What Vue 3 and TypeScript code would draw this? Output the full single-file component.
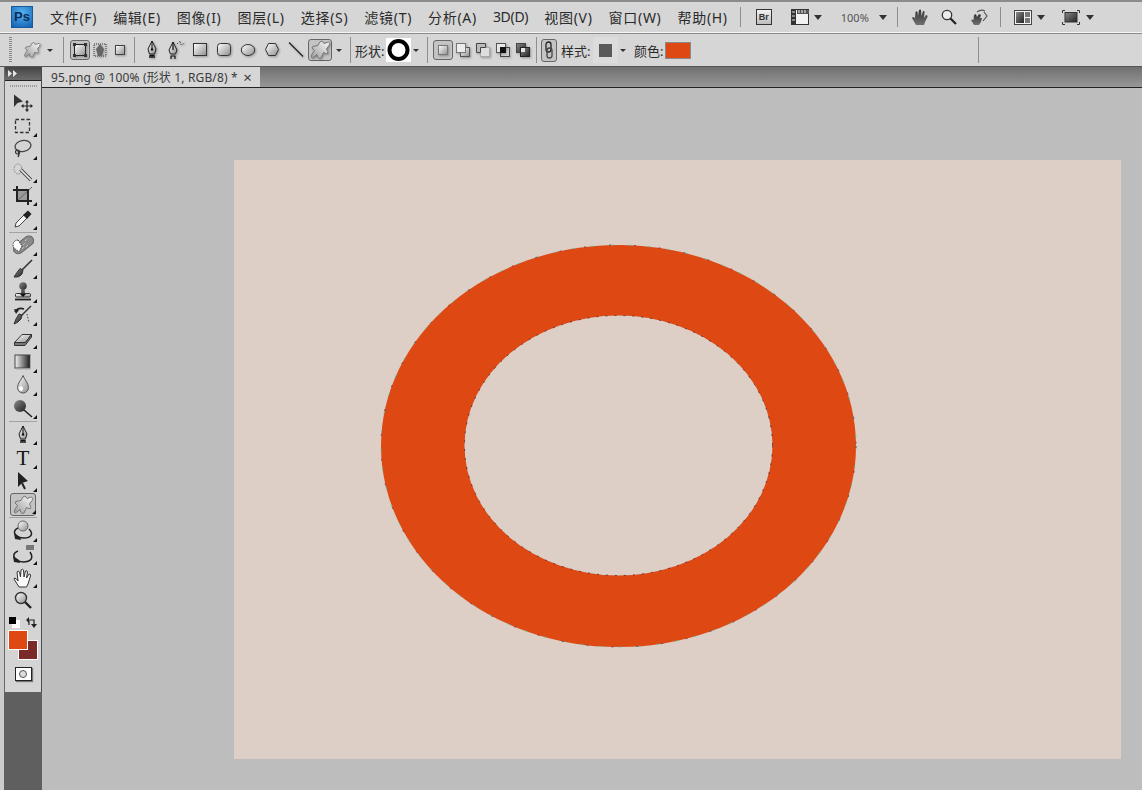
<script setup lang="ts">
interface Tool {
  icon: string;
  glyph?: string;
  corner?: boolean;
  active?: boolean;
}

const menus = ['文件(F)', '编辑(E)', '图像(I)', '图层(L)', '选择(S)', '滤镜(T)', '分析(A)', '3D(D)', '视图(V)', '窗口(W)', '帮助(H)'];

const shapeTools = ['i-pen', 'i-freepen', 'i-rect', 'i-rrect', 'i-ellipse', 'i-poly', 'i-line', 'i-splat'];
const pathModes = ['i-mode-new', 'i-mode-add', 'i-mode-sub', 'i-mode-int', 'i-mode-exc'];

// groupes de la barre d'outils, séparés par un filet
const toolGroups: Tool[][] = [
  [
    { icon: 't-move' },
    { icon: 't-marquee', corner: true },
    { icon: 't-lasso', corner: true },
    { icon: 't-wand', corner: true },
    { icon: 't-crop', corner: true },
    { icon: 't-dropper', corner: true },
  ],
  [
    { icon: 't-heal', corner: true },
    { icon: 't-brush', corner: true },
    { icon: 't-stamp', corner: true },
    { icon: 't-history', corner: true },
    { icon: 't-eraser', corner: true },
    { icon: 't-gradient', corner: true },
    { icon: 't-blur', corner: true },
    { icon: 't-dodge', corner: true },
  ],
  [
    { icon: 'i-pen', corner: true },
    { icon: 't-type', glyph: 'T', corner: true },
    { icon: 't-select', corner: true },
    { icon: 'i-splat', corner: true, active: true },
  ],
  [
    { icon: 't-rotate', corner: true },
    { icon: 't-orbit', corner: true },
    { icon: 't-hand', corner: true },
    { icon: 't-zoom' },
  ],
];
</script>

<template>
  <svg class="defs" aria-hidden="true">
    <defs>
      <linearGradient id="g-light" x1="0" y1="0" x2="1" y2="1">
        <stop offset="0" stop-color="#ffffff" />
        <stop offset="1" stop-color="#8f8f8f" />
      </linearGradient>
      <linearGradient id="g-dark" x1="0" y1="0" x2="1" y2="1">
        <stop offset="0" stop-color="#8a8a8a" />
        <stop offset="1" stop-color="#222222" />
      </linearGradient>
      <linearGradient id="g-ramp" x1="0" y1="0" x2="1" y2="0">
        <stop offset="0" stop-color="#f4f4f4" />
        <stop offset="1" stop-color="#1c1c1c" />
      </linearGradient>
      <linearGradient id="g-hand" x1="0" y1="0" x2="0" y2="1">
        <stop offset="0" stop-color="#333333" />
        <stop offset="1" stop-color="#707070" />
      </linearGradient>
      <linearGradient id="g-splat" x1="1" y1="0" x2="0" y2="1">
        <stop offset="0" stop-color="#fafafa" />
        <stop offset="1" stop-color="#9a9a9a" />
      </linearGradient>
    </defs>

    <symbol id="i-pen" viewBox="0 0 24 24">
      <path d="M12 3 L16 11 L14.500 16 H9.500 L8 11 Z" fill="url(#g-light)" stroke="#222" />
      <path d="M12 3 V11" stroke="#111" />
      <circle cx="12" cy="11.500" r="1.200" fill="#111" />
      <path d="M9.500 17.500 H14.500 M10 20 V17.500 M14 20 V17.500 M12 20 V17.500" stroke="#111" stroke-width="1.400" />
    </symbol>
    <symbol id="i-freepen" viewBox="0 0 24 24">
      <path d="M9 4 L13 12 L11.500 16 H6.500 L5 12 Z" fill="url(#g-light)" stroke="#222" />
      <path d="M9 4 V12 M6.500 18 H11.500 M7 21 V18 M11 21 V18" stroke="#111" stroke-width="1.200" />
      <path d="M13 6 L16 3 L17 7 L21 5" fill="none" stroke="#555" stroke-dasharray="1.500 1" />
    </symbol>
    <symbol id="i-rect" viewBox="0 0 24 24">
      <rect x="5.500" y="5.500" width="13" height="12" fill="url(#g-light)" stroke="#333" />
    </symbol>
    <symbol id="i-rrect" viewBox="0 0 24 24">
      <rect x="5.500" y="5.500" width="13" height="12" rx="3" fill="url(#g-light)" stroke="#333" />
    </symbol>
    <symbol id="i-ellipse" viewBox="0 0 24 24">
      <ellipse cx="12" cy="12" rx="6.700" ry="5.500" fill="url(#g-light)" stroke="#333" />
    </symbol>
    <symbol id="i-poly" viewBox="0 0 24 24">
      <path d="M8.500 5.500 H15.500 L18.500 11.500 L15.500 17.500 H8.500 L5.500 11.500 Z" fill="url(#g-light)" stroke="#333" />
    </symbol>
    <symbol id="i-line" viewBox="0 0 24 24">
      <path d="M5 4.500 L19 18.500" stroke="#222" stroke-width="1.300" />
    </symbol>
    <symbol id="i-splat" viewBox="0 0 24 24">
      <path d="M4.500 20 Q2.500 20 3.500 17 L6.500 12.500 L4 10 Q4 8 7 8 L10 7.500 Q11.500 3 14 3 L16 5.500 L20.500 4 Q22.500 5 21 7.500 L18.500 11 Q20.500 14 19.500 15.500 Q18 16 15.500 14.500 L13 20 Q11 21.500 9.500 19 L9 16.500 Z" fill="url(#g-splat)" stroke="#777" />
    </symbol>
    <symbol id="i-mode-new" viewBox="0 0 20 20">
      <rect x="5.500" y="5.500" width="9" height="9" fill="url(#g-light)" stroke="#777" />
    </symbol>
    <symbol id="i-mode-add" viewBox="0 0 20 20">
      <rect x="7.500" y="7.500" width="9" height="9" fill="url(#g-light)" stroke="#555" />
      <rect x="3.500" y="3.500" width="9" height="9" fill="#ececec" stroke="#777" />
    </symbol>
    <symbol id="i-mode-sub" viewBox="0 0 20 20">
      <rect x="7.500" y="7.500" width="9" height="9" fill="#dedede" stroke="#aaa" />
      <path d="M3.500 12.500 V3.500 H12.500 V7.500 H7.500 V12.500 Z" fill="#bbb" stroke="#444" />
    </symbol>
    <symbol id="i-mode-int" viewBox="0 0 20 20">
      <rect x="3.500" y="3.500" width="9" height="9" fill="#e6e6e6" stroke="#555" />
      <rect x="7.500" y="7.500" width="9" height="9" fill="none" stroke="#444" />
      <rect x="7" y="7" width="6" height="6" fill="#111" />
    </symbol>
    <symbol id="i-mode-exc" viewBox="0 0 20 20">
      <rect x="3.500" y="3.500" width="9" height="9" fill="url(#g-dark)" stroke="#444" />
      <rect x="7.500" y="7.500" width="9" height="9" fill="url(#g-dark)" stroke="#222" />
      <rect x="8" y="8" width="4" height="4" fill="#e4e4e4" />
    </symbol>

    <symbol id="t-move" viewBox="0 0 24 24">
      <path d="M3 3.500 V16 L6.500 12 L12 10.500 Z" fill="#333" />
      <path d="M16 10 V20 M11 15 H21" stroke="#222" stroke-width="1.200" />
      <path d="M16 9 L14 11.500 H18 Z M16 21 L14 18.500 H18 Z M10 15 L12.500 13 V17 Z M22 15 L19.500 13 V17 Z" fill="#222" />
    </symbol>
    <symbol id="t-marquee" viewBox="0 0 24 24">
      <rect x="4.500" y="5.500" width="14" height="13" fill="none" stroke="#333" stroke-width="1.300" stroke-dasharray="3.500 2" />
    </symbol>
    <symbol id="t-lasso" viewBox="0 0 24 24">
      <ellipse cx="12" cy="9" rx="8" ry="5.500" fill="none" stroke="#444" stroke-width="1.300" transform="rotate(-10 12 9)" />
      <circle cx="6.500" cy="15" r="2" fill="none" stroke="#333" stroke-width="1.200" />
      <path d="M7 14 Q9 17 7 20" fill="none" stroke="#333" stroke-width="1.300" />
    </symbol>
    <symbol id="t-wand" viewBox="0 0 24 24">
      <ellipse cx="7" cy="8" rx="4" ry="5" fill="none" stroke="#888" stroke-dasharray="1.500 1" />
      <path d="M9.500 8.500 L20 19" stroke="#444" stroke-width="3.400" />
      <path d="M9.500 8.500 L20 19" stroke="#e8e8e8" stroke-width="1.700" />
    </symbol>
    <symbol id="t-crop" viewBox="0 0 24 24">
      <rect x="6" y="6" width="11" height="11" fill="#9a9a9a" />
      <path d="M5 18 L21 3" stroke="#666" />
      <path d="M6 2 V17 H21 M2 6 H17 V21" fill="none" stroke="#222" stroke-width="2" />
    </symbol>
    <symbol id="t-dropper" viewBox="0 0 24 24">
      <path d="M4 20 L5 16 L13 8 L16 11 L8 19 Z" fill="#f5f5f5" stroke="#444" />
      <path d="M12 8 L17 3.500 L20.500 7 L16 12 Z" fill="#222" />
    </symbol>
    <symbol id="t-heal" viewBox="0 0 24 24">
      <rect x="1" y="7.500" width="23" height="9.500" rx="4.700" fill="#8a8a8a" stroke="#666" transform="rotate(-38 12 12)" />
      <path d="M7 7 A5 5 0 0 0 3 15 L8 19 L11 13 Z" fill="#fff" stroke="#333" stroke-dasharray="1.500 1" />
      <path d="M12 12 l2 -2 M15 14 l2 -2 M11 16 l2 -2 M14 8 l2 -2" stroke="#d8d8d8" stroke-dasharray="1 1" />
    </symbol>
    <symbol id="t-brush" viewBox="0 0 24 24">
      <path d="M11 13 L21 3" stroke="#333" stroke-width="1.600" />
      <path d="M3 20 Q8 21 11 17 L12 13 L9 11.500 Q6 15 3 20 Z" fill="url(#g-dark)" stroke="#333" />
    </symbol>
    <symbol id="t-stamp" viewBox="0 0 24 24">
      <circle cx="12" cy="6" r="3.800" fill="url(#g-dark)" />
      <path d="M10.500 9 H13.500 L14 13 H10 Z" fill="#555" />
      <rect x="4.500" y="13.500" width="15" height="3.500" rx="1" fill="url(#g-light)" stroke="#333" />
      <path d="M9 14 H15 L12 17 Z" fill="#111" />
      <path d="M4 19.500 H20" stroke="#222" stroke-width="1.800" />
    </symbol>
    <symbol id="t-history" viewBox="0 0 24 24">
      <path d="M10 13 L20 3" stroke="#333" stroke-width="1.500" />
      <path d="M3 21 Q7 20 10 16 L11 12 L8 11 Q5 15 3 21 Z" fill="url(#g-dark)" stroke="#333" />
      <path d="M4 9 Q7 4 13 6" fill="none" stroke="#222" stroke-width="1.600" />
      <path d="M3 6 L5 11 L8 7 Z" fill="#222" />
      <path d="M16 11 L18 20" stroke="#444" stroke-dasharray="1.500 1.500" />
    </symbol>
    <symbol id="t-eraser" viewBox="0 0 24 24">
      <path d="M3.500 15.500 L11 7.500 H20.500 L14.500 15.500 Z" fill="url(#g-light)" stroke="#333" />
      <path d="M3.500 15.500 V18.500 H14 L20.500 10 V7.500 L14.500 15.500 Z" fill="#777" stroke="#333" />
    </symbol>
    <symbol id="t-gradient" viewBox="0 0 24 24">
      <rect x="4" y="5" width="15" height="13" fill="url(#g-ramp)" stroke="#444" />
      <path d="M19.500 6 V19 H5" fill="none" stroke="#aaa" />
    </symbol>
    <symbol id="t-blur" viewBox="0 0 24 24">
      <path d="M12 2.500 C13 6 17.500 10 17.500 14.500 A5.500 5.500 0 0 1 6.500 14.500 C6.500 10 11 6 12 2.500 Z" fill="url(#g-light)" stroke="#555" />
      <ellipse cx="10" cy="15.500" rx="2" ry="2.500" fill="#fff" />
    </symbol>
    <symbol id="t-dodge" viewBox="0 0 24 24">
      <circle cx="9" cy="9" r="6" fill="url(#g-dark)" />
      <path d="M13 13 L21 20" stroke="#222" stroke-width="1.500" />
    </symbol>
    <symbol id="t-select" viewBox="0 0 24 24">
      <path d="M7 3 V18 L11 14 L17 12 Z" fill="#222" />
      <path d="M11 14 L14 20" stroke="#222" stroke-width="2" />
    </symbol>
    <symbol id="t-rotate" viewBox="0 0 24 24">
      <circle cx="12" cy="7" r="5" fill="url(#g-light)" stroke="#666" />
      <path d="M7 9 C0 12 4 19 13 19 C20 19 23 15 18 10" fill="none" stroke="#222" stroke-width="1.500" />
      <path d="M3 14 L9 18 L10 21 L4 20 Z" fill="#222" />
    </symbol>
    <symbol id="t-orbit" viewBox="0 0 24 24">
      <rect x="15" y="3" width="8" height="5" fill="#777" />
      <path d="M7 9 C0 12 2 19 12 20 C20 20 23 16 19 10" fill="none" stroke="#222" stroke-width="1.500" />
      <path d="M2 14 L8 18 L9 21 L3 20 Z" fill="#222" />
    </symbol>
    <symbol id="t-hand" viewBox="0 0 24 24">
      <path d="M8 21 L3 13 Q3 11 5.500 13 L7 15 L6 6 Q7 4 8.500 6 L9.500 11 L10 4 Q11.500 2.500 12.500 4 L13 11 L14.500 5 Q16 4 16.500 6 L15.500 12 L18 8 Q20 8 19.500 10 L17 18 L15.500 21 Z" fill="#fafafa" stroke="#333" />
    </symbol>
    <symbol id="t-zoom" viewBox="0 0 24 24">
      <circle cx="10" cy="9" r="5.500" fill="url(#g-light)" stroke="#333" stroke-width="1.400" />
      <path d="M14 13 L20 19" stroke="#222" stroke-width="2.400" />
    </symbol>
  </svg>

  <div class="app">
    <header class="menu">
      <div class="logo">Ps</div>
      <nav class="menu-items">
        <span v-for="m in menus" :key="m" :class="{ tight: m.startsWith('3D') }">{{ m }}</span>
      </nav>
      <i class="vsep menu-sep-a"></i>
      <div class="br">Br</div>
      <svg class="film" width="18" height="16" viewBox="0 0 18 16">
        <rect x="0.500" y="0.500" width="17" height="15" fill="#f2f2f2" stroke="#333" />
        <rect x="0" y="0" width="5" height="16" fill="#333" />
        <path d="M1 3 h3 M1 7 h3 M1 11 h3" stroke="#ddd" />
        <path d="M6 1 H18 V5 H6 Z" fill="#555" />
        <path d="M8 1 v3 M11 1 v3 M14 1 v3" stroke="#eee" />
      </svg>
      <i class="caret film-caret"></i>
      <span class="zoom-level">100%</span>
      <i class="caret zoom-caret"></i>
      <i class="vsep hand-sep"></i>
      <svg class="top-ico hand" width="16" height="17" viewBox="0 0 16 17">
        <path d="M4 16 L0 9 Q1 7 3 9 L3.500 3 Q5 1.500 5.500 3 L6 7 L7 1 Q8.500 0 9 1 L9.500 7 L11 2 Q13 1.500 12.500 3.500 L12 9 L14 6 Q16 6 15.500 8 L13 13 L12 16 Z" fill="url(#g-hand)" />
      </svg>
      <svg class="top-ico mag" width="16" height="16" viewBox="0 0 16 16">
        <circle cx="6" cy="6" r="4.700" fill="#ececec" stroke="#333" stroke-width="1.300" />
        <path d="M9.500 9.500 L15 15" stroke="#222" stroke-width="2.200" />
      </svg>
      <svg class="top-ico rot" width="17" height="17" viewBox="0 0 17 17">
        <path d="M6 3 Q10 0 14 2 M13 3 L16 7 L12 12" fill="none" stroke="#555" stroke-width="1.200" />
        <path d="M3 16 L0 11 Q1 10 2.500 11 L3 6 L5 5 L6 8 L8 5 L10 6 L9 9 L11 9 L10 13 L8 16 Z" fill="url(#g-hand)" />
      </svg>
      <i class="vsep layout-sep"></i>
      <svg class="layout" width="18" height="15" viewBox="0 0 18 15">
        <rect x="0.500" y="0.500" width="17" height="14" fill="#f4f4f4" stroke="#444" />
        <rect x="2" y="2" width="8" height="11" fill="url(#g-dark)" />
        <rect x="11" y="2" width="5" height="5" fill="#777" />
        <rect x="11" y="8" width="5" height="5" fill="#777" />
      </svg>
      <i class="caret layout-caret"></i>
      <svg class="screen" width="18" height="15" viewBox="0 0 18 15">
        <path d="M0.500 3 V0.500 H3 M15 0.500 H17.500 V3 M0.500 12 V14.500 H3 M15 14.500 H17.500 V12" fill="none" stroke="#333" />
        <rect x="3" y="2.500" width="12" height="9.500" fill="url(#g-dark)" stroke="#333" />
      </svg>
      <i class="caret screen-caret"></i>
    </header>

    <div class="options">
      <i class="grip"></i>
      <svg class="opt-star" width="20" height="20"><use href="#i-splat" /></svg>
      <i class="caret small opt-star-caret"></i>
      <i class="vsep sep-a"></i>
      <div class="geo-modes">
        <span class="btn on">
          <svg width="20" height="20" viewBox="0 0 20 20">
            <rect x="4.500" y="4.500" width="11" height="11" fill="url(#g-light)" stroke="#222" />
            <path d="M3 3 h3 v3 h-3 z M14 3 h3 v3 h-3 z M3 14 h3 v3 h-3 z M14 14 h3 v3 h-3 z" fill="#333" />
          </svg>
        </span>
        <span class="btn">
          <svg width="20" height="20" viewBox="0 0 20 20">
            <path d="M4 4 H16 V16 H4 Z" fill="none" stroke="#333" stroke-dasharray="1 1" />
            <path d="M10 4 L14 9 L12 16 H8 L6 9 Z" fill="#666" />
          </svg>
        </span>
        <span class="btn">
          <svg width="20" height="20" viewBox="0 0 20 20">
            <rect x="5.500" y="5.500" width="9" height="9" fill="url(#g-light)" stroke="#444" />
          </svg>
        </span>
      </div>
      <i class="vsep sep-b"></i>
      <div class="shape-tools">
        <span v-for="s in shapeTools" :key="s" class="slot" :class="{ on: s === 'i-splat' }">
          <svg width="24" height="24"><use :href="'#' + s" /></svg>
        </span>
      </div>
      <i class="caret small shape-caret"></i>
      <i class="vsep sep-c"></i>
      <span class="opt-label shape-label">形状:</span>
      <div class="ring-pick">
        <svg width="25" height="24" viewBox="0 0 25 24">
          <circle cx="12.500" cy="12" r="9" fill="none" stroke="#000" stroke-width="4" />
        </svg>
      </div>
      <i class="caret small ring-caret"></i>
      <i class="vsep sep-d"></i>
      <div class="path-modes">
        <span v-for="(p, i) in pathModes" :key="p" class="btn" :class="{ on: i === 0 }">
          <svg width="20" height="20"><use :href="'#' + p" /></svg>
        </span>
      </div>
      <i class="vsep sep-e"></i>
      <span class="link">
        <svg width="10" height="18" viewBox="0 0 10 18">
          <rect x="2" y="1" width="5" height="10" rx="2.500" fill="none" stroke="#222" stroke-width="1.300" />
          <rect x="3" y="7" width="5" height="10" rx="2.500" fill="none" stroke="#444" stroke-width="1.300" />
        </svg>
      </span>
      <span class="opt-label style-label">样式:</span>
      <div class="style-pick"><b></b></div>
      <i class="caret small style-caret"></i>
      <span class="opt-label color-label">颜色:</span>
      <div class="color-pick"></div>
      <i class="vsep sep-f"></i>
    </div>

    <div class="body">
      <aside class="tools">
        <div class="tools-head">
          <svg width="9" height="7" viewBox="0 0 9 7"><path d="M0 0 L4 3.500 L0 7 Z M5 0 L9 3.500 L5 7 Z" fill="#e6e6e6" /></svg>
        </div>
        <i class="tools-grip"></i>
        <template v-for="(group, g) in toolGroups" :key="g">
          <i v-if="g > 0" class="tool-sep"></i>
          <span v-for="t in group" :key="t.icon" class="tool" :class="{ on: t.active }">
            <b v-if="t.glyph" class="glyph">{{ t.glyph }}</b>
            <svg v-else width="24" height="24"><use :href="'#' + t.icon" /></svg>
            <i v-if="t.corner" class="corner"></i>
          </span>
        </template>

        <div class="mini-row">
          <svg width="11" height="11" viewBox="0 0 11 11">
            <rect x="3" y="3" width="8" height="8" fill="#fff" />
            <rect x="0" y="0" width="7" height="7" fill="#000" />
          </svg>
          <svg width="11" height="11" viewBox="0 0 11 11">
            <path d="M2 3 H8 V7 M3 8 V4" fill="none" stroke="#222" stroke-width="1.200" />
            <path d="M0 3 L3 0 V6 Z M8 11 L5 7 H11 Z" fill="#222" />
          </svg>
        </div>
        <div class="swatches">
          <div class="swatch back"></div>
          <div class="swatch front"></div>
        </div>
        <div class="mask"><i></i></div>
      </aside>

      <main class="work">
        <div class="tabs">
          <div class="tab">
            <span>95.png @ 100% (形状 1, RGB/8) *</span>
            <span class="close">×</span>
          </div>
        </div>
        <div class="stage">
          <div class="doc">
            <svg width="887" height="599" viewBox="0 0 887 599">
              <ellipse cx="384.500" cy="286" rx="237.500" ry="201" fill="#dd4813" />
              <ellipse cx="384.500" cy="286" rx="237.500" ry="201" fill="none" stroke="#4fc7a0" stroke-width="0.800" stroke-dasharray="3 16" />
              <ellipse cx="384.500" cy="286" rx="237.500" ry="201" fill="none" stroke="#6a2a50" stroke-width="0.800" stroke-dasharray="2 23" />
              <ellipse cx="384.500" cy="285.500" rx="154" ry="130" fill="#ddcec6" />
              <ellipse cx="384.500" cy="285.500" rx="154" ry="130" fill="none" stroke="#3b2a40" stroke-width="0.800" stroke-dasharray="2 7" />
            </svg>
          </div>
        </div>
      </main>
    </div>
  </div>
</template>

<style scoped>
.defs {
  position: absolute;
  width: 0;
  height: 0;
}
.app {
  width: 1142px;
  height: 790px;
  display: flex;
  flex-direction: column;
  overflow: hidden;
  background: #cbcbcb;
  font-family: "Noto Sans", "Noto Sans CJK SC", sans-serif;
  color: #2a2a2a;
}
i {
  display: block;
  flex: none;
}
svg {
  display: block;
  flex: none;
}

/* barre de menu */
.menu {
  height: 33px;
  box-sizing: border-box;
  display: flex;
  align-items: center;
  flex: none;
  background: #d6d6d6;
  border-top: 2px solid #8c8c8c;
  border-bottom: 1px solid #f4f4f4;
}
.logo {
  margin-left: 11px;
  width: 22px;
  height: 22px;
  background: radial-gradient(circle at 50% 30%, #55b4f2, #0f5fb4);
  border: 1px solid #1b5a9a;
  box-sizing: border-box;
  color: #0c2c55;
  font: bold 13px/20px "Liberation Sans", sans-serif;
  text-align: center;
}
.menu-items {
  margin-left: 17px;
  display: flex;
  gap: 16px;
  font-size: 14px;
  letter-spacing: 0.700px;
  white-space: nowrap;
}
.menu-items .tight {
  letter-spacing: -0.300px;
}
.vsep {
  width: 1px;
  height: 20px;
  background: #8e8e8e;
}
.menu-sep-a { margin-left: 12px; }
.br {
  margin-left: 15px;
  width: 16px;
  height: 16px;
  box-sizing: border-box;
  border: 1px solid #333;
  background: linear-gradient(#f2f2f2, #bdbdbd);
  font: bold 9px/14px "Liberation Sans", sans-serif;
  text-align: center;
  color: #333;
}
.film { margin-left: 19px; }
.caret {
  width: 0;
  height: 0;
  border-left: 4px solid transparent;
  border-right: 4px solid transparent;
  border-top: 5px solid #333;
}
.caret.small {
  border-left-width: 3px;
  border-right-width: 3px;
  border-top-width: 3px;
}
.film-caret { margin-left: 5px; }
.zoom-level {
  margin-left: 19px;
  font-size: 11px;
  color: #555;
}
.zoom-caret { margin-left: 10px; }
.hand-sep { margin-left: 10px; }
.hand { margin-left: 14px; }
.mag { margin-left: 13px; }
.rot { margin-left: 14px; }
.layout-sep { margin-left: 12px; }
.layout { margin-left: 13px; }
.layout-caret { margin-left: 5px; }
.screen { margin-left: 17px; }
.screen-caret { margin-left: 6px; }

/* barre d'options */
.options {
  height: 34px;
  box-sizing: border-box;
  flex: none;
  display: flex;
  align-items: center;
  padding-left: 9px;
  background: #d6d6d6;
  border-top: 1px solid #8c8c8c;
  border-bottom: 1px solid #555;
}
.options .vsep {
  height: 26px;
}
.grip {
  width: 3px;
  height: 26px;
  background: repeating-linear-gradient(#8a8a8a 0 1px, transparent 1px 2px);
}
.opt-star { margin-left: 10px; }
.opt-star-caret { margin-left: 5px; }
.opt-star,
.btn svg,
.slot svg {
  filter: drop-shadow(1px 1px 1px rgba(0, 0, 0, 0.3));
}
.sep-a { margin-left: 10px; }
.geo-modes {
  margin-left: 6px;
  display: flex;
}
.btn {
  width: 20px;
  height: 20px;
  box-sizing: border-box;
  display: flex;
  align-items: center;
  justify-content: center;
}
.btn.on {
  border: 1px solid #666;
  border-radius: 3px;
  background: #c4c4c4;
}
.sep-b { margin-left: 4px; }
.shape-tools {
  margin-left: 5px;
  display: flex;
}
.slot {
  width: 24px;
  height: 22px;
  box-sizing: border-box;
  display: flex;
  align-items: center;
  justify-content: center;
}
.slot.on {
  border: 1px solid #666;
  border-radius: 3px;
  background: #c4c4c4;
}
.shape-caret { margin-left: 4px; }
.sep-c { margin-left: 8px; }
.opt-label {
  font-size: 13px;
  white-space: nowrap;
}
.shape-label { margin-left: 4px; width: 28px; }
.ring-pick {
  margin-left: 3px;
  width: 25px;
  height: 24px;
  background: #fff;
}
.ring-caret { margin-left: 2px; }
.sep-d { margin-left: 8px; }
.path-modes {
  margin-left: 5px;
  display: flex;
}
.sep-e { margin-left: 3px; }
.link {
  margin-left: 4px;
  width: 16px;
  height: 23px;
  box-sizing: border-box;
  border: 1px solid #666;
  border-radius: 3px;
  background: #c4c4c4;
  display: flex;
  align-items: center;
  justify-content: center;
}
.style-label { margin-left: 4px; width: 28px; }
.style-pick {
  margin-left: 4px;
  width: 25px;
  height: 26px;
  background: #dcdcdc;
  display: flex;
  align-items: center;
  justify-content: center;
}
.style-pick b {
  width: 13px;
  height: 13px;
  background: #5a5a5a;
}
.style-caret { margin-left: 2px; }
.color-label { margin-left: 8px; width: 27px; }
.color-pick {
  margin-left: 4px;
  width: 26px;
  height: 17px;
  box-sizing: border-box;
  border: 1px solid #8a8a8a;
  background: #dd4813;
}
.sep-f { margin-left: 287px; }

/* corps */
.body {
  flex: 1;
  min-height: 0;
  display: flex;
}
.tools {
  width: 36px;
  margin-left: 4px;
  flex: none;
  display: flex;
  flex-direction: column;
  align-items: center;
  height: 625px;
  background: #d4d4d4;
  border-left: 1px solid #6a6a6a;
  border-right: 1px solid #4a4a4a;
  box-shadow: 0 98px 0 #5f5f5f;
  position: relative;
}
.tools-head {
  align-self: stretch;
  height: 13px;
  flex: none;
  background: linear-gradient(#444, #6c6c6c);
  border-bottom: 1px solid #222;
  display: flex;
  align-items: center;
  padding-left: 3px;
}
.tools-grip {
  margin: 4px 0 4px;
  width: 27px;
  height: 2px;
  background: repeating-linear-gradient(90deg, #999 0 1px, transparent 1px 2px);
}
.tool-sep {
  width: 28px;
  height: 1px;
  margin: 1px 0;
  background: #a2a2a2;
}
.tool {
  position: relative;
  width: 26px;
  height: 23.300px;
  flex: none;
  box-sizing: border-box;
  display: flex;
  align-items: center;
  justify-content: center;
}
.tool.on {
  border: 1px solid #666;
  border-radius: 3px;
  background: #c4c4c4;
}
.glyph {
  font: 21px/23px "Liberation Serif", serif;
  color: #111;
}
.corner {
  position: absolute;
  right: -1px;
  bottom: 1px;
  border-left: 4px solid transparent;
  border-bottom: 4px solid #111;
}
.mini-row {
  margin-top: 4px;
  width: 28px;
  display: flex;
  justify-content: space-between;
}
.swatches {
  margin-top: 2px;
  width: 30px;
  height: 30px;
  position: relative;
  flex: none;
}
.swatch {
  position: absolute;
  width: 20px;
  height: 20px;
  box-sizing: border-box;
  border: 1px solid #fff;
}
.swatch.front {
  left: 0;
  top: 0;
  background: #dd4813;
}
.swatch.back {
  left: 10px;
  top: 10px;
  background: #7a2a28;
}
.mask {
  margin-top: 7px;
  width: 17px;
  height: 14px;
  flex: none;
  box-sizing: border-box;
  background: #fff;
  border: 1px solid #222;
  box-shadow: 1px 1px 1px #777;
  display: flex;
  align-items: center;
  justify-content: center;
}
.mask i {
  width: 8px;
  height: 8px;
  box-sizing: border-box;
  border: 1px solid #555;
  border-radius: 50%;
  background: #ddd;
}

.work {
  flex: 1;
  min-width: 0;
  display: flex;
  flex-direction: column;
  background: #bdbdbd;
}
.tabs {
  height: 21px;
  flex: none;
  box-sizing: border-box;
  background: linear-gradient(#707070, #979797);
  border-bottom: 1px solid #222;
}
.tab {
  width: 218px;
  height: 20px;
  box-sizing: border-box;
  padding: 0 8px 0 9px;
  background: #d6d6d6;
  display: flex;
  align-items: center;
  justify-content: space-between;
  font-size: 12px;
  letter-spacing: 0.150px;
  white-space: nowrap;
  color: #3a3a3a;
}
.close {
  font-size: 15px;
  line-height: 1;
}
.stage {
  flex: 1;
  min-height: 0;
  padding: 72px 0 0 192px;
}
.doc {
  width: 887px;
  height: 599px;
  background: #ddcec6;
}
</style>
